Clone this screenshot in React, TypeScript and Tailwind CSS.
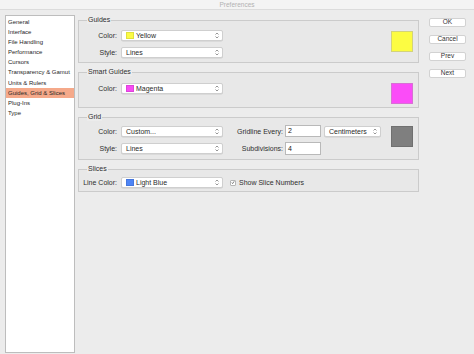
import React from "react";

const font = { fontFamily: '"Liberation Sans", Arial, sans-serif' };

function Chevron() {
  return (
    <svg width="4" height="7" viewBox="0 0 4 7" className="shrink-0">
      <path d="M0.5 2.5 L2 1 L3.5 2.5" fill="none" stroke="#6a6a6a" strokeWidth="0.7" />
      <path d="M0.5 4.5 L2 6 L3.5 4.5" fill="none" stroke="#6a6a6a" strokeWidth="0.7" />
    </svg>
  );
}

function Select({ label, swatch, width }: { label: string; swatch?: string; width: string }) {
  return (
    <div
      className={`${width} h-[11px] bg-white border border-[#cfcfcf] rounded-[2px] shadow-[0_0.5px_0.5px_rgba(0,0,0,0.12)] flex items-center pl-[4px] pr-[3px] gap-[2px]`}
    >
      {swatch && <span className={`w-[8px] h-[7px] border border-black/10 ${swatch}`} />}
      <span className="flex-1 text-[7px] leading-none text-[#2b2b2b]">{label}</span>
      <Chevron />
    </div>
  );
}

function Label({ text, width }: { text: string; width: string }) {
  return <span className={`${width} text-right text-[7px] leading-none text-[#2f2f2f] pr-[4px]`}>{text}</span>;
}

function Group({ title, className, children }: { title: string; className?: string; children: React.ReactNode }) {
  return (
    <fieldset className={`border border-[#cbcbcb] bg-[#e8e8e8] ${className ?? ""}`}>
      <legend className="ml-[8px] px-[1px] h-[8px] leading-[8px] text-[7px] text-[#2f2f2f] bg-[#ececec]">{title}</legend>
      {children}
    </fieldset>
  );
}

function Swatch({ color }: { color: string }) {
  return <div className={`ml-auto mr-[5px] w-[22px] h-[21px] border ${color}`} />;
}

const items = [
  "General",
  "Interface",
  "File Handling",
  "Performance",
  "Cursors",
  "Transparency & Gamut",
  "Units & Rulers",
  "Guides, Grid & Slices",
  "Plug-Ins",
  "Type",
];

export default function App() {
  return (
    <div className="w-[474px] h-[354px] bg-[#ececec] flex flex-col overflow-hidden" style={font}>
      <div className="h-[10px] bg-[#f4f4f4] border-b border-[#dcdcdc] flex items-center justify-center text-[6.5px] text-[#b2b2b2]">
        Preferences
      </div>

      <div className="flex items-start pl-[5px] pt-[5px]">
        {/* category list */}
        <div className="w-[70px] h-[338px] bg-white border border-[#bdbdbd] pt-[0.5px]">
          {items.map((item) => (
            <div
              key={item}
              className={`h-[10.2px] leading-[10.2px] pl-[2px] text-[6px] whitespace-nowrap text-[#262626] ${
                item === "Guides, Grid & Slices" ? "bg-[#f5a98a]" : ""
              }`}
            >
              {item}
            </div>
          ))}
        </div>

        {/* settings */}
        <div className="ml-[3px] w-[341px] pt-[1px] flex flex-col">
          <Group title="Guides" className="pb-[4px]">
            <div className="flex">
              <div className="flex flex-col gap-[6px] mt-[6px]">
                <div className="flex items-center h-[11px]">
                  <Label text="Color:" width="w-[42px]" />
                  <Select label="Yellow" swatch="bg-[#fbfb45]" width="w-[102px]" />
                </div>
                <div className="flex items-center h-[11px]">
                  <Label text="Style:" width="w-[42px]" />
                  <Select label="Lines" width="w-[102px]" />
                </div>
              </div>
              <div className="ml-auto mt-[7px]">
                <div className="mr-[5px] w-[22px] h-[21px] border border-[#d3d37a] bg-[#fcfc42]" />
              </div>
            </div>
          </Group>

          <Group title="Smart Guides" className="mt-[5px] pb-[3px]">
            <div className="flex items-start">
              <div className="flex items-center h-[11px] mt-[7px]">
                <Label text="Color:" width="w-[42px]" />
                <Select label="Magenta" swatch="bg-[#f74cf3]" width="w-[102px]" />
              </div>
              <div className="ml-auto mt-[7px] mr-[5px] w-[22px] h-[21px] border border-[#d870d4] bg-[#fb4cf8]" />
            </div>
          </Group>

          <Group title="Grid" className="mt-[5px] pb-[5px]">
            <div className="flex items-start">
              <div className="flex flex-col gap-[5px] mt-[4px]">
                <div className="flex items-center h-[12px]">
                  <Label text="Color:" width="w-[42px]" />
                  <Select label="Custom..." width="w-[102px]" />
                  <span className="w-[61px] text-right text-[7px] leading-none text-[#2f2f2f] pr-[1px]">Gridline Every:</span>
                  <div className="ml-[1px] w-[36px] h-[12px] bg-white border border-[#b9b9b9] text-[7px] leading-[10px] pl-[2px] text-[#222]">
                    2
                  </div>
                  <div className="ml-[3px]">
                    <Select label="Centimeters" width="w-[57px]" />
                  </div>
                </div>
                <div className="flex items-center h-[12px]">
                  <Label text="Style:" width="w-[42px]" />
                  <Select label="Lines" width="w-[102px]" />
                  <span className="w-[61px] text-right text-[7px] leading-none text-[#2f2f2f] pr-[1px]">Subdivisions:</span>
                  <div className="ml-[1px] w-[36px] h-[13px] bg-white border border-[#b9b9b9] text-[7px] leading-[11px] pl-[2px] text-[#222]">
                    4
                  </div>
                </div>
              </div>
              <div className="ml-auto mt-[5px] mr-[5px] w-[22px] h-[21px] border border-[#707070] bg-[#7f7f7f]" />
            </div>
          </Group>

          <Group title="Slices" className="mt-[5px] pb-[3px]">
            <div className="flex items-center h-[11px] mt-[4px]">
              <Label text="Line Color:" width="w-[42px]" />
              <Select label="Light Blue" swatch="bg-[#4e85f6]" width="w-[102px]" />
              <div className="ml-[7px] w-[6px] h-[6px] bg-white border border-[#b5b5b5] rounded-[1px] flex items-center justify-center">
                <svg width="5" height="5" viewBox="0 0 5 5">
                  <path d="M1 2.6 L2 3.8 L4 1" fill="none" stroke="#333" strokeWidth="0.8" />
                </svg>
              </div>
              <span className="ml-[3px] text-[7px] leading-none text-[#2f2f2f]">Show Slice Numbers</span>
            </div>
          </Group>
        </div>

        {/* buttons */}
        <div className="ml-[10px] mt-[3px] flex flex-col gap-[8px]">
          {["OK", "Cancel", "Prev", "Next"].map((b) => (
            <button
              key={b}
              className="w-[37px] h-[9px] bg-white border border-[#d2d2d2] rounded-[2px] text-[6.5px] leading-none text-[#333] flex items-center justify-center"
            >
              {b}
            </button>
          ))}
        </div>
      </div>
    </div>
  );
}
